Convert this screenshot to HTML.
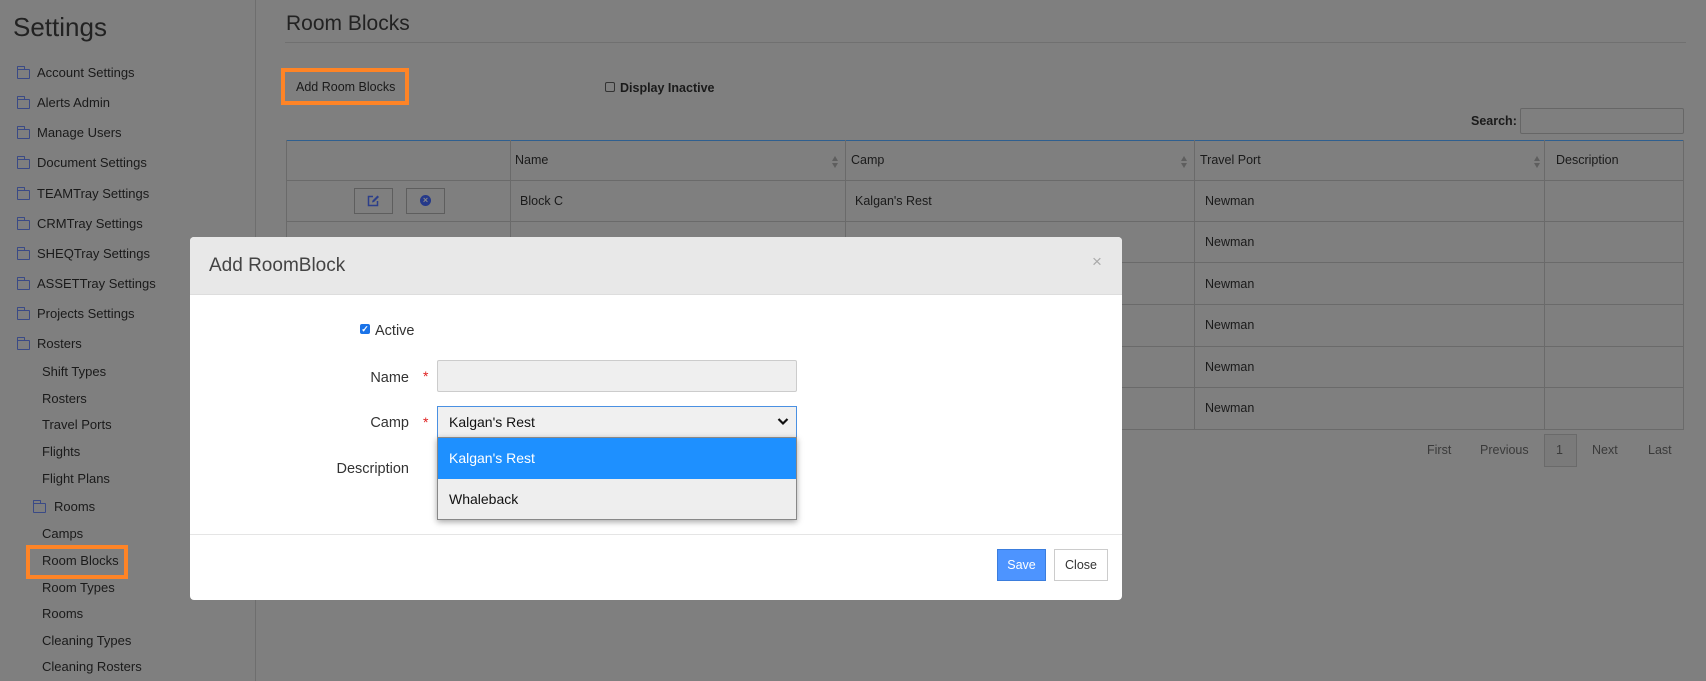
<!DOCTYPE html>
<html><head><style>
*{margin:0;padding:0;box-sizing:border-box}
body{width:1706px;height:681px;overflow:hidden;background:#7f7f7f;font-family:"Liberation Sans",sans-serif;color:#1a1a1a;position:relative}
.a{position:absolute;white-space:nowrap}
.m{font-size:13px;line-height:16px}
.fi{position:absolute;width:13px;height:10px;border:1.3px solid #3a4a86;border-radius:1px}
.fi:before{content:"";position:absolute;left:-1.3px;top:-4px;width:6px;height:3px;border:1.3px solid #3a4a86;border-bottom:none;border-radius:1px 1px 0 0}
.t{font-size:12.5px;line-height:15px}
.hl{position:absolute;height:1px;background:#6a6a6a}
.vl{position:absolute;width:1px;background:#6a6a6a}
.sort{position:absolute;width:0;height:0;border-left:3.5px solid transparent;border-right:3.5px solid transparent}
</style></head><body>
<div class="a" style="left:255px;top:0;width:1px;height:681px;background:#6e6e6e"></div>
<div class="a" style="left:13px;top:12px;font-size:26px;line-height:30px;color:#222">Settings</div>

<div class="fi" style="left:17px;top:69px"></div><div class="a m" style="left:37px;top:65px">Account Settings</div>
<div class="fi" style="left:17px;top:99px"></div><div class="a m" style="left:37px;top:95px">Alerts Admin</div>
<div class="fi" style="left:17px;top:129px"></div><div class="a m" style="left:37px;top:125px">Manage Users</div>
<div class="fi" style="left:17px;top:159px"></div><div class="a m" style="left:37px;top:155px">Document Settings</div>
<div class="fi" style="left:17px;top:190px"></div><div class="a m" style="left:37px;top:186px">TEAMTray Settings</div>
<div class="fi" style="left:17px;top:220px"></div><div class="a m" style="left:37px;top:216px">CRMTray Settings</div>
<div class="fi" style="left:17px;top:250px"></div><div class="a m" style="left:37px;top:246px">SHEQTray Settings</div>
<div class="fi" style="left:17px;top:280px"></div><div class="a m" style="left:37px;top:276px">ASSETTray Settings</div>
<div class="fi" style="left:17px;top:310px"></div><div class="a m" style="left:37px;top:306px">Projects Settings</div>
<div class="fi" style="left:17px;top:340px"></div><div class="a m" style="left:37px;top:336px">Rosters</div>
<div class="a m" style="left:42px;top:364px">Shift Types</div>
<div class="a m" style="left:42px;top:391px">Rosters</div>
<div class="a m" style="left:42px;top:417px">Travel Ports</div>
<div class="a m" style="left:42px;top:444px">Flights</div>
<div class="a m" style="left:42px;top:471px">Flight Plans</div>
<div class="fi" style="left:33px;top:503px"></div><div class="a m" style="left:54px;top:499px">Rooms</div>
<div class="a m" style="left:42px;top:526px">Camps</div>
<div class="a" style="left:26px;top:545px;width:102px;height:34px;border:4px solid #ff8426"></div>
<div class="a m" style="left:42px;top:553px">Room Blocks</div>
<div class="a m" style="left:42px;top:580px">Room Types</div>
<div class="a m" style="left:42px;top:606px">Rooms</div>
<div class="a m" style="left:42px;top:633px">Cleaning Types</div>
<div class="a m" style="left:42px;top:659px">Cleaning Rosters</div>

<div class="a" style="left:286px;top:11px;font-size:21px;line-height:26px;color:#222">Room Blocks</div>
<div class="a" style="left:285px;top:42px;width:1401px;height:1px;background:#707070"></div>
<div class="a" style="left:281px;top:68px;width:128px;height:37px;border:4px solid #ff8426"></div>
<div class="a m" style="left:296px;top:79px;font-size:12.5px">Add Room Blocks</div>
<div class="a" style="left:605px;top:82px;width:10px;height:10px;border:1px solid #333;border-radius:2px"></div>
<div class="a t" style="left:620px;top:81px;font-weight:bold">Display Inactive</div>
<div class="a t" style="left:1471px;top:114px;font-weight:bold">Search:</div>
<div class="a" style="left:1520px;top:108px;width:164px;height:26px;border:1px solid #666;border-radius:2px"></div>

<div class="a" style="left:286px;top:140px;width:1397px;height:1px;background:#2f5f8f"></div>
<div class="hl" style="left:286px;top:180px;width:1397px"></div>
<div class="hl" style="left:286px;top:221px;width:1397px"></div>
<div class="hl" style="left:286px;top:262px;width:1397px"></div>
<div class="hl" style="left:286px;top:304px;width:1397px"></div>
<div class="hl" style="left:286px;top:346px;width:1397px"></div>
<div class="hl" style="left:286px;top:387px;width:1397px"></div>
<div class="hl" style="left:286px;top:429px;width:1397px"></div>
<div class="vl" style="left:286px;top:140px;height:290px"></div>
<div class="vl" style="left:510px;top:140px;height:290px"></div>
<div class="vl" style="left:845px;top:140px;height:290px"></div>
<div class="vl" style="left:1194px;top:140px;height:290px"></div>
<div class="vl" style="left:1544px;top:140px;height:290px"></div>
<div class="vl" style="left:1683px;top:140px;height:290px"></div>
<div class="a t" style="left:515px;top:153px">Name</div>
<div class="a t" style="left:851px;top:153px">Camp</div>
<div class="a t" style="left:1200px;top:153px">Travel Port</div>
<div class="a t" style="left:1556px;top:153px">Description</div>
<div class="sort" style="left:832px;top:156px;border-bottom:5px solid #5e5e5e"></div><div class="sort" style="left:832px;top:163px;border-top:5px solid #5e5e5e"></div>
<div class="sort" style="left:1181px;top:156px;border-bottom:5px solid #5e5e5e"></div><div class="sort" style="left:1181px;top:163px;border-top:5px solid #5e5e5e"></div>
<div class="sort" style="left:1534px;top:156px;border-bottom:5px solid #5e5e5e"></div><div class="sort" style="left:1534px;top:163px;border-top:5px solid #5e5e5e"></div>
<div class="a" style="left:354px;top:188px;width:39px;height:26px;border:1px solid #5e5e5e"></div>
<svg class="a" style="left:366px;top:194px" width="14" height="14"><path d="M7 2.5H2.5V11.5H11.5V7" fill="none" stroke="#2c3f8a" stroke-width="1.5"/><path d="M6 8.5L6.5 6.5L11.5 1.5L13 3L8 8Z" fill="#2c3f8a"/></svg>
<div class="a" style="left:406px;top:188px;width:39px;height:26px;border:1px solid #5e5e5e"></div>
<div class="a" style="left:420px;top:195px;width:11px;height:11px;background:#25398a;border-radius:50%;color:#888;font-size:9px;line-height:11px;text-align:center;font-weight:bold">×</div>
<div class="a t" style="left:520px;top:194px">Block C</div>
<div class="a t" style="left:855px;top:194px">Kalgan's Rest</div>
<div class="a t" style="left:1205px;top:194px">Newman</div>
<div class="a t" style="left:1205px;top:235px">Newman</div>
<div class="a t" style="left:1205px;top:277px">Newman</div>
<div class="a t" style="left:1205px;top:318px">Newman</div>
<div class="a t" style="left:1205px;top:360px">Newman</div>
<div class="a t" style="left:1205px;top:401px">Newman</div>
<div class="a" style="left:1544px;top:434px;width:33px;height:33px;border:1px solid #6a6a6a;background:#7a7a7a"></div>
<div class="a t" style="left:1427px;top:443px;color:#3a3a3a">First</div>
<div class="a t" style="left:1480px;top:443px;color:#3a3a3a">Previous</div>
<div class="a t" style="left:1556px;top:443px;color:#3a3a3a">1</div>
<div class="a t" style="left:1592px;top:443px;color:#3a3a3a">Next</div>
<div class="a t" style="left:1648px;top:443px;color:#3a3a3a">Last</div>

<div class="a" style="left:190px;top:237px;width:932px;height:363px;background:#fff;border-radius:4px;overflow:hidden">
 <div style="position:absolute;left:0;top:0;width:932px;height:58px;background:#e8e8e8;border-bottom:1px solid #ddd"></div>
 <div class="a" style="left:19px;top:17px;font-size:19px;line-height:24px;color:#444">Add RoomBlock</div>
 <div class="a" style="left:902px;top:15px;font-size:17px;color:#aaa">×</div>
 <div class="a" style="left:0;top:297px;width:932px;height:1px;background:#e5e5e5"></div>
</div>
<div class="a" style="left:360px;top:324px;width:10px;height:10px;background:#1a73e8;border-radius:2px;color:#fff;font-size:9px;line-height:10px;text-align:center;font-weight:bold">✓</div>
<div class="a" style="left:375px;top:322px;font-size:14.5px;line-height:18px;color:#333">Active</div>
<div class="a" style="left:300px;top:369px;width:109px;text-align:right;font-size:14.5px;line-height:18px;color:#333">Name</div>
<div class="a" style="left:423px;top:368px;color:#e02020;font-size:14px">*</div>
<div class="a" style="left:437px;top:360px;width:360px;height:32px;background:#efefef;border:1px solid #ccc;border-radius:2px"></div>
<div class="a" style="left:300px;top:414px;width:109px;text-align:right;font-size:14.5px;line-height:18px;color:#333">Camp</div>
<div class="a" style="left:423px;top:414px;color:#e02020;font-size:14px">*</div>
<div class="a" style="left:437px;top:406px;width:360px;height:32px;background:#f0f0f0;border:1px solid #4a90e2"></div>
<div class="a" style="left:449px;top:414px;font-size:14px;line-height:16px;color:#111">Kalgan's Rest</div>
<svg class="a" style="left:777px;top:417px" width="12" height="9"><path d="M1.5 2 L6 6.5 L10.5 2" fill="none" stroke="#111" stroke-width="2.2"/></svg>
<div class="a" style="left:300px;top:460px;width:109px;text-align:right;font-size:14.5px;line-height:18px;color:#333">Description</div>
<div class="a" style="left:437px;top:437px;width:360px;height:83px;background:#eee;border:1px solid #888;box-shadow:0 2px 6px rgba(0,0,0,.35)">
 <div style="height:41px;background:#1e90ff;color:#fff;font-size:14px;line-height:41px;padding-left:11px">Kalgan's Rest</div>
 <div style="height:40px;color:#111;font-size:14px;line-height:40px;padding-left:11px">Whaleback</div>
</div>
<div class="a" style="left:997px;top:549px;width:49px;height:32px;background:#4d94ff;border:1px solid #3b7ddd;color:#fff;font-size:12.5px;line-height:30px;text-align:center">Save</div>
<div class="a" style="left:1054px;top:549px;width:54px;height:32px;background:#fff;border:1px solid #ccc;color:#333;font-size:12.5px;line-height:30px;text-align:center">Close</div>
</body></html>
